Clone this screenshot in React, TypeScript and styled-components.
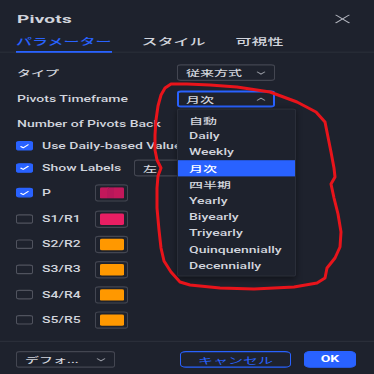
import React from "react";
import styled, { createGlobalStyle } from "styled-components";

const GlobalStyle = createGlobalStyle`
  html, body { margin: 0; padding: 0; background: #1e222d; overflow: hidden; }
  * { box-sizing: border-box; }
`;

const Stage = styled.div`
  position: relative;
  width: 374px;
  height: 374px;
  overflow: hidden;
  background: #1e222d;
`;

const Dialog = styled.div`
  width: 374px;
  height: 623px;
  transform: scaleY(0.6);
  transform-origin: 0 0;
  display: flex;
  flex-direction: column;
  background: #1e222d;
  color: #d1d4dc;
  font-family: Roboto, "Noto Sans CJK JP", sans-serif;
  font-size: 14px;
  font-weight: 500;
`;

const Header = styled.div`
  height: 62px;
  display: flex;
  align-items: center;
  justify-content: space-between;
  padding: 0 24px 0 17px;
`;

const Title = styled.div`
  font-size: 19px;
  font-weight: 700;
  color: #d1d4dc;
  letter-spacing: 0.2px;
`;

const CloseBtn = styled.svg`
  width: 15px;
  height: 15px;
  display: block;
`;

const TabBar = styled.div`
  display: flex;
  gap: 30px;
  padding: 0 16px;
  border-bottom: 2px solid #2a2e39;
`;

const Tab = styled.div<{ $active?: boolean }>`
  font-size: 16px;
  line-height: 16px;
  font-weight: 500;
  padding-bottom: 7px;
  color: ${(p) => (p.$active ? "#2962ff" : "#d1d4dc")};
  border-bottom: 3px solid ${(p) => (p.$active ? "#2962ff" : "transparent")};
  margin-bottom: -2px;
`;

const Body = styled.div`
  flex: 1;
  padding: 11px 0 0 16px;
  display: flex;
  flex-direction: column;
`;

const Row = styled.div<{ $h: number }>`
  height: ${(p) => p.$h}px;
  display: flex;
  align-items: center;
`;

const Label = styled.div`
  width: 161px;
  padding-left: 1px;
  white-space: nowrap;
`;

const Anchor = styled.div`
  position: relative;
`;

const Select = styled.div<{ $w: number; $open?: boolean }>`
  width: ${(p) => p.$w}px;
  height: 28px;
  flex: none;
  border-style: solid;
  border-color: ${(p) => (p.$open ? "#2962ff" : "#434651")};
  border-width: ${(p) => (p.$open ? "3px 2px" : "2px 1px")};
  border-radius: 4px;
  display: flex;
  align-items: center;
  justify-content: space-between;
  padding: 0 ${(p) => (p.$open ? 7 : 8)}px;
  color: #d1d4dc;
  white-space: nowrap;
`;

const Chevron = styled.svg`
  width: 10px;
  height: 7px;
  display: block;
  flex: none;
`;

const Menu = styled.div`
  position: absolute;
  top: calc(100% + 2px);
  left: 0;
  width: 119px;
  z-index: 5;
  background: #1e222d;
  border-style: solid;
  border-color: #2a2e39;
  border-width: 2px 1px;
  border-radius: 3px;
  box-shadow: 0 3px 8px rgba(0, 0, 0, 0.45);
  padding: 3px 0;
`;

const MenuItem = styled.div<{ $active?: boolean }>`
  height: 27px;
  display: flex;
  align-items: center;
  padding-left: 11px;
  white-space: nowrap;
  background: ${(p) => (p.$active ? "#2962ff" : "transparent")};
  color: ${(p) => (p.$active ? "#ffffff" : "#d1d4dc")};
`;

const Box = styled.span<{ $on?: boolean }>`
  width: 17px;
  height: 16px;
  flex: none;
  border-radius: 3px;
  display: flex;
  align-items: center;
  justify-content: center;
  background: ${(p) => (p.$on ? "#2962ff" : "transparent")};
  border-style: solid;
  border-color: ${(p) => (p.$on ? "#2962ff" : "#50535e")};
  border-width: 2px 1px;
`;

const CheckText = styled.span<{ $w: number }>`
  margin-left: 9px;
  white-space: nowrap;
  overflow: hidden;
  width: ${(p) => p.$w}px;
  flex: none;
`;

const Swatch = styled.span`
  width: 33px;
  height: 29px;
  flex: none;
  border-style: solid;
  border-color: #434651;
  border-width: 2px 1px;
  border-radius: 4px;
  display: flex;
  align-items: center;
  justify-content: center;
`;

const SwatchFill = styled.span<{ $c: string; $alpha?: boolean }>`
  width: 24px;
  height: 19px;
  border-radius: 2px;
  background: ${(p) =>
    p.$alpha
      ? `repeating-conic-gradient(${p.$c} 0 25%, #a8164f 0 50%) 6px 0 / 3px 3px no-repeat, linear-gradient(90deg, ${p.$c} 0 30%, #b7175a 30% 60%, ${p.$c} 60%)`
      : p.$c};
`;

const Footer = styled.div`
  height: 55px;
  border-top: 2px solid #2a2e39;
  padding: 15px 18px 0 16px;
  display: flex;
  justify-content: space-between;
  align-items: flex-start;
`;

const Actions = styled.div`
  display: flex;
  gap: 13px;
`;

const Button = styled.div<{ $primary?: boolean; $w: number }>`
  width: ${(p) => p.$w}px;
  height: 28px;
  border-radius: 6px;
  display: flex;
  align-items: center;
  justify-content: center;
  border-style: solid;
  border-color: #2962ff;
  border-width: 2px 1px;
  background: ${(p) => (p.$primary ? "#2962ff" : "transparent")};
  color: ${(p) => (p.$primary ? "#ffffff" : "#2962ff")};
  font-size: ${(p) => (p.$primary ? 14 : 15)}px;
  font-weight: ${(p) => (p.$primary ? 700 : 400)};
`;

const Overlay = styled.svg`
  position: absolute;
  left: 0;
  top: 0;
  width: 374px;
  height: 374px;
  pointer-events: none;
  z-index: 10;
`;

const ChevronDown = () => (
  <Chevron viewBox="0 0 10 7">
    <path d="M1 1.5 L5 5.5 L9 1.5" fill="none" stroke="#9598a1" strokeWidth="1.3" />
  </Chevron>
);

const ChevronUp = () => (
  <Chevron viewBox="0 0 10 7">
    <path d="M1 5.5 L5 1.5 L9 5.5" fill="none" stroke="#9598a1" strokeWidth="1.3" />
  </Chevron>
);

const Check = ({ on }: { on?: boolean }) => (
  <Box $on={on}>
    {on && (
      <svg width="11" height="9" viewBox="0 0 11 9">
        <path d="M1.5 4.8 L4.2 7.2 L9.5 1.8" fill="none" stroke="#ffffff" strokeWidth="1.6" />
      </svg>
    )}
  </Box>
);

const options = [
  "自動",
  "Daily",
  "Weekly",
  "月次",
  "四半期",
  "Yearly",
  "Biyearly",
  "Triyearly",
  "Quinquennially",
  "Decennially",
];

const levels = [
  { name: "S1/R1", color: "#e91e63" },
  { name: "S2/R2", color: "#ff9800" },
  { name: "S3/R3", color: "#ff9800" },
  { name: "S4/R4", color: "#ff9800" },
  { name: "S5/R5", color: "#ff9800" },
];

const pts: [number, number][] = [
  [155, 150], [155, 135], [156, 120], [158, 106], [161, 95], [165, 88], [171, 84],
  [187, 84], [210, 85], [237, 87], [270, 92], [297, 102], [316, 112], [325, 122],
  [328, 137], [331, 152], [334, 168], [335, 177], [331, 184], [334, 198], [338, 214],
  [341, 232], [340, 247], [335, 258], [327, 268], [325, 278], [317, 283], [294, 287],
  [254, 289], [220, 288], [190, 285], [180, 282], [171, 272], [164, 261], [161, 248],
  [159, 230], [157, 208], [157, 188], [158, 176], [161, 168], [157, 160], [155, 150],
];

const redPath = "M " + pts.map(([x, y]) => `${x} ${y}`).join(" L ");

export default function App() {
  return (
    <>
      <GlobalStyle />
      <Stage>
        <Dialog>
          <Header>
            <Title>Pivots</Title>
            <CloseBtn viewBox="0 0 15 15">
              <path d="M0.5 0.5 L14.5 14.5 M14.5 0.5 L0.5 14.5" stroke="#b2b5be" strokeWidth="1.3" fill="none" />
            </CloseBtn>
          </Header>
          <TabBar>
            <Tab $active>パラメーター</Tab>
            <Tab>スタイル</Tab>
            <Tab>可視性</Tab>
          </TabBar>
          <Body>
            <Row $h={44}>
              <Label>タイプ</Label>
              <Select $w={98}>
                <span>従来方式</span>
                <ChevronDown />
              </Select>
            </Row>
            <Row $h={44}>
              <Label>Pivots Timeframe</Label>
              <Anchor>
                <Select $w={98} $open>
                  <span>月次</span>
                  <ChevronUp />
                </Select>
                <Menu>
                  {options.map((o) => (
                    <MenuItem key={o} $active={o === "月次"}>
                      {o}
                    </MenuItem>
                  ))}
                </Menu>
              </Anchor>
            </Row>
            <Row $h={38}>
              <Label>Number of Pivots Back</Label>
              <Select $w={98} />
            </Row>
            <Row $h={36}>
              <Check on />
              <CheckText $w={135}>Use Daily-based Values</CheckText>
            </Row>
            <Row $h={37}>
              <Check on />
              <CheckText $w={92}>Show Labels</CheckText>
              <Select $w={98}>
                <span>左</span>
              </Select>
            </Row>
            <Row $h={46}>
              <Check on />
              <CheckText $w={53}>P</CheckText>
              <Swatch>
                <SwatchFill $c="#c2185b" $alpha />
              </Swatch>
            </Row>
            {levels.map((l) => (
              <Row $h={42} key={l.name}>
                <Check />
                <CheckText $w={53}>{l.name}</CheckText>
                <Swatch>
                  <SwatchFill $c={l.color} />
                </Swatch>
              </Row>
            ))}
          </Body>
          <Footer>
            <Select $w={99}>
              <span>デフォ...</span>
              <ChevronDown />
            </Select>
            <Actions>
              <Button $w={111}>キャンセル</Button>
              <Button $w={52} $primary>
                OK
              </Button>
            </Actions>
          </Footer>
        </Dialog>
        <Overlay viewBox="0 0 374 374">
          <path d={redPath} fill="none" stroke="#e8141b" strokeWidth="3" strokeLinejoin="round" strokeLinecap="round" />
        </Overlay>
      </Stage>
    </>
  );
}
